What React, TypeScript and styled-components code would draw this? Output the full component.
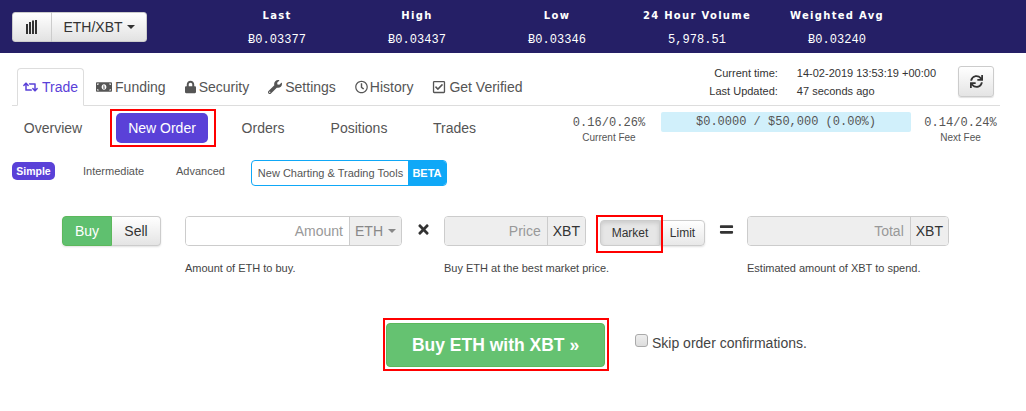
import React from "react";
import styled, { createGlobalStyle } from "styled-components";
import {
  FaEquals,
  FaLock,
  FaMoneyBillAlt,
  FaRegCheckSquare,
  FaRegClock,
  FaRetweet,
  FaSync,
  FaTimes,
  FaWrench,
} from "react-icons/fa";

const GlobalStyle = createGlobalStyle`
  html, body {
    margin: 0;
    padding: 0;
    background: #fff;
    font-family: "Liberation Sans", Arial, sans-serif;
    color: #333;
  }
  * {
    box-sizing: border-box;
  }
`;

const Page = styled.div`
  width: 1026px;
  height: 411px;
  overflow: hidden;
`;

const Header = styled.header`
  height: 53px;
  background: #251f66;
  display: flex;
  align-items: flex-start;
  padding: 12px 0 0 12px;
`;

const SymbolGroup = styled.div`
  display: flex;
  width: 135px;
  height: 30px;
`;

const SymbolButton = styled.div<{ $first?: boolean }>`
  height: 30px;
  display: flex;
  align-items: center;
  justify-content: center;
  gap: 4px;
  width: ${(p) => (p.$first ? "40px" : "96px")};
  font-size: 14px;
  color: #333;
  background: linear-gradient(#fff, #e2e2e2);
  border: 1px solid #ccc;
  border-radius: ${(p) => (p.$first ? "3px 0 0 3px" : "0 3px 3px 0")};
  margin-left: ${(p) => (p.$first ? "0" : "-1px")};
`;

const Caret = styled.span`
  width: 0;
  height: 0;
  border-left: 4px solid transparent;
  border-right: 4px solid transparent;
  border-top: 4px solid currentColor;
`;

const Stats = styled.div`
  display: flex;
  margin-left: 60px;
  margin-top: -4px;
`;

const Stat = styled.div`
  width: 140px;
  text-align: center;
  color: #fff;
`;

const StatLabel = styled.div`
  font-family: "DejaVu Sans", sans-serif;
  font-size: 10px;
  font-weight: bold;
  letter-spacing: 1.3px;
  height: 14px;
  line-height: 14px;
  margin-top: 1px;
  white-space: nowrap;
`;

const StatValue = styled.div`
  font-family: "Liberation Mono", monospace;
  font-size: 12px;
  letter-spacing: 0.05px;
  height: 14px;
  line-height: 14px;
  margin-top: 10px;
`;

const TabBar = styled.div`
  margin: 15px 26px 0 12px;
  height: 38px;
  border-bottom: 1px solid #ddd;
  display: flex;
  padding-left: 5px;
`;

const Tab = styled.a<{ $active?: boolean; $icon: number; $gap?: number }>`
  height: 38px;
  display: flex;
  align-items: center;
  gap: ${(p) => p.$gap ?? 3}px;
  font-size: 14px;
  padding: 0 ${(p) => (p.$active ? "5px" : "7px")} 0 5px;
  margin-right: ${(p) => (p.$active ? "6px" : "5px")};
  color: ${(p) => (p.$active ? "#5a41d8" : "#555")};
  background: ${(p) => (p.$active ? "#fff" : "transparent")};
  border: 1px solid ${(p) => (p.$active ? "#ddd" : "transparent")};
  border-bottom-color: ${(p) => (p.$active ? "#fff" : "transparent")};
  border-radius: 4px 4px 0 0;
  white-space: nowrap;

  svg {
    width: ${(p) => p.$icon}px;
    height: 14px;
    flex: none;
    color: ${(p) => (p.$active ? "#5a41d8" : "#555")};
  }
`;

const TimeBlock = styled.div`
  margin-left: auto;
  display: grid;
  grid-template-columns: auto auto;
  column-gap: 19px;
  row-gap: 6px;
  align-self: flex-start;
  margin-top: -1px;
  font-size: 11px;
  line-height: 12px;
  color: #333;
`;

const TimeLabel = styled.div`
  text-align: right;
`;

const RefreshButton = styled.div`
  width: 36px;
  height: 31px;
  margin: -2px 6px 0 22px;
  border: 1px solid #ccc;
  border-radius: 3px;
  background: linear-gradient(#fff, #e4e4e4);
  box-shadow: 0 1px 1px rgba(0, 0, 0, 0.12);
  display: flex;
  align-items: center;
  justify-content: center;
  font-size: 13px;
  color: #333;
`;

const SubNav = styled.div`
  display: flex;
  align-items: flex-start;
  height: 54px;
  padding: 3px 0 0 12px;
`;

const SubLink = styled.a<{ $width: number; $after?: number }>`
  width: ${(p) => p.$width}px;
  margin-right: ${(p) => p.$after ?? 0}px;
  flex: none;
  height: 38px;
  display: flex;
  align-items: center;
  justify-content: center;
  font-size: 14px;
  color: #555;
`;

const RedBox = styled.div`
  border: 2px solid #f00;
  flex: none;
  display: flex;
`;

const Pill = styled.a`
  width: 92px;
  height: 30px;
  background: #5a41d8;
  color: #fff;
  border-radius: 5px;
  display: flex;
  align-items: center;
  justify-content: center;
  font-size: 14px;
`;

const NewOrderBox = styled(RedBox)`
  width: 106px;
  height: 38px;
  padding: 2px 0 0 4px;
`;

const FeeBlock = styled.div<{ $width: number }>`
  width: ${(p) => p.$width}px;
  flex: none;
  text-align: center;
  margin-top: 7px;
`;

const FeeValue = styled.div`
  font-family: "Liberation Mono", monospace;
  font-size: 12px;
  letter-spacing: 0.05px;
  line-height: 14px;
  color: #555;
`;

const FeeLabel = styled.div`
  font-size: 10px;
  line-height: 12px;
  margin-top: 2px;
  color: #555;
`;

const VolumeBar = styled.div`
  width: 250px;
  height: 20px;
  flex: none;
  margin-top: 3px;
  background: #d1f0fb;
  border-radius: 2px;
  display: flex;
  align-items: center;
  justify-content: center;
  font-family: "Liberation Mono", monospace;
  font-size: 12px;
  color: #555;
`;

const ModeRow = styled.div`
  display: flex;
  align-items: flex-start;
  padding-left: 12px;
  height: 30px;
`;

const ModePill = styled.a`
  width: 43px;
  height: 18px;
  margin-top: 2px;
  background: #5a41d8;
  color: #fff;
  font-size: 10.5px;
  font-weight: bold;
  border-radius: 5px;
  display: flex;
  align-items: center;
  justify-content: center;
`;

const ModeLink = styled.a<{ $width: number; $before?: number }>`
  width: ${(p) => p.$width}px;
  padding-left: ${(p) => p.$before ?? 0}px;
  height: 18px;
  margin-top: 2px;
  font-size: 11px;
  color: #555;
  display: flex;
  align-items: center;
`;

const BetaLink = styled.div`
  width: 196px;
  height: 26px;
  border: 1px solid #0fa8f7;
  border-radius: 4px;
  overflow: hidden;
  display: flex;
  font-size: 11px;
  color: #555;
`;

const BetaText = styled.span`
  flex: 1;
  display: flex;
  align-items: center;
  justify-content: center;
  padding-left: 1px;
  white-space: nowrap;
`;

const BetaTag = styled.span`
  width: 38px;
  background: #0fa8f7;
  color: #fff;
  font-weight: bold;
  font-size: 11px;
  display: flex;
  align-items: center;
  justify-content: center;
`;

const FormRow = styled.div`
  display: flex;
  align-items: flex-start;
  margin-top: 26px;
  padding-left: 62px;
  height: 72px;
`;

const Side = styled.div`
  display: flex;
  width: 99px;
  height: 30px;
  margin-right: 24px;
  border-radius: 4px;
  box-shadow: 0 1px 2px rgba(0, 0, 0, 0.12);
`;

const SideButton = styled.div<{ $active?: boolean }>`
  flex: ${(p) => (p.$active ? "0 0 50px" : "1")};
  display: flex;
  align-items: center;
  justify-content: center;
  font-size: 14px;
  color: ${(p) => (p.$active ? "#fff" : "#333")};
  background: ${(p) => (p.$active ? "#5fc06f" : "linear-gradient(#fff, #e4e4e4)")};
  border: 1px solid ${(p) => (p.$active ? "#5cb85c" : "#ccc")};
  border-left-width: ${(p) => (p.$active ? "1px" : "0")};
  border-radius: ${(p) => (p.$active ? "4px 0 0 4px" : "0 4px 4px 0")};
`;

const Field = styled.div<{ $width: number }>`
  width: ${(p) => p.$width}px;
  flex: none;
`;

const InputGroup = styled.div`
  display: flex;
  height: 30px;
  border: 1px solid #ccc;
  border-radius: 4px;
  overflow: hidden;
`;

const FakeInput = styled.div<{ $disabled?: boolean }>`
  flex: 1;
  display: flex;
  align-items: center;
  justify-content: flex-end;
  padding-right: 6px;
  font-size: 14px;
  color: #999;
  background: ${(p) => (p.$disabled ? "#eee" : "#fff")};
`;

const Addon = styled.div<{ $muted?: boolean }>`
  display: flex;
  align-items: center;
  justify-content: center;
  gap: 5px;
  padding: 0 5px;
  font-size: 14px;
  color: ${(p) => (p.$muted ? "#888" : "#333")};
  background: #eee;
  border-left: 1px solid #ccc;
`;

const Help = styled.div`
  font-size: 11px;
  line-height: 12px;
  margin-top: 16px;
  color: #444;
  white-space: nowrap;
`;

const Operator = styled.div<{ $width: number }>`
  width: ${(p) => p.$width}px;
  height: 26px;
  flex: none;
  display: flex;
  align-items: center;
  justify-content: center;
  font-size: 15px;
  color: #333;
`;

const OrderType = styled.div`
  display: flex;
  margin-top: -1px;
  margin-left: 10px;
  width: 109px;
  flex: none;
`;

const MarketBox = styled(RedBox)`
  width: 67px;
  height: 38px;
  padding: 3px 0 0 2px;
  margin-right: -3px;
  position: relative;
  z-index: 1;
`;

const TypeButton = styled.div<{ $active?: boolean }>`
  height: 26px;
  display: flex;
  align-items: center;
  justify-content: center;
  font-size: 12px;
  color: #333;
  width: ${(p) => (p.$active ? "60px" : "45px")};
  margin-top: ${(p) => (p.$active ? "0" : "5px")};
  background: ${(p) => (p.$active ? "#e6e6e6" : "linear-gradient(#fff, #e8e8e8)")};
  box-shadow: ${(p) =>
    p.$active ? "inset 0 2px 4px rgba(0,0,0,.12)" : "0 1px 2px rgba(0,0,0,.12)"};
  border: 1px solid #ccc;
  border-radius: ${(p) => (p.$active ? "4px 0 0 4px" : "0 4px 4px 0")};
`;

const SubmitRow = styled.div`
  display: flex;
  align-items: flex-start;
  margin-top: 30px;
  padding-left: 383px;
`;

const SubmitBox = styled(RedBox)`
  width: 226px;
  height: 53px;
  padding: 3px 1px 1px;
`;

const SubmitButton = styled.a`
  width: 219px;
  height: 44px;
  background: #65c271;
  border: 1px solid #5cb85c;
  border-radius: 4px;
  color: #fff;
  font-size: 17.5px;
  font-weight: bold;
  display: flex;
  align-items: center;
  justify-content: center;
`;

const SkipLabel = styled.label`
  display: flex;
  align-items: center;
  margin: 15px 0 0 26px;
  height: 20px;
  font-size: 14px;
  color: #444;
  gap: 4px;
`;

const Checkbox = styled.span`
  width: 13px;
  height: 13px;
  margin-top: -5px;
  border: 1px solid #aaa;
  border-radius: 3px;
  background: linear-gradient(#eee, #ddd);
`;

const BarsIcon = () => (
  <svg width="12" height="14" viewBox="0 0 12 14" fill="#333">
    <rect x="0" y="4" width="2" height="10" />
    <rect x="3" y="2" width="2" height="12" />
    <rect x="6" y="0.5" width="2" height="13.5" />
    <rect x="9" y="0" width="2" height="14" />
  </svg>
);

const stats = [
  ["Last", "Ƀ0.03377"],
  ["High", "Ƀ0.03437"],
  ["Low", "Ƀ0.03346"],
  ["24 Hour Volume", "5,978.51"],
  ["Weighted Avg", "Ƀ0.03240"],
];

const App: React.FC = () => {
  return (
    <Page>
      <GlobalStyle />
      <Header>
        <SymbolGroup>
          <SymbolButton $first>
            <BarsIcon />
          </SymbolButton>
          <SymbolButton>
            ETH/XBT <Caret />
          </SymbolButton>
        </SymbolGroup>
        <Stats>
          {stats.map(([label, value]) => (
            <Stat key={label}>
              <StatLabel>{label}</StatLabel>
              <StatValue>{value}</StatValue>
            </Stat>
          ))}
        </Stats>
      </Header>

      <TabBar>
        <Tab $active $icon={15} $gap={4}>
          <FaRetweet /> Trade
        </Tab>
        <Tab $icon={16} $gap={3}>
          <FaMoneyBillAlt /> Funding
        </Tab>
        <Tab $icon={11} $gap={3}>
          <FaLock /> Security
        </Tab>
        <Tab $icon={14}>
          <FaWrench /> Settings
        </Tab>
        <Tab $icon={13} $gap={2}>
          <FaRegClock /> History
        </Tab>
        <Tab $icon={14} $gap={3}>
          <FaRegCheckSquare /> Get Verified
        </Tab>
        <TimeBlock>
          <TimeLabel>Current time:</TimeLabel>
          <div>14-02-2019 13:53:19 +00:00</div>
          <TimeLabel>Last Updated:</TimeLabel>
          <div>47 seconds ago</div>
        </TimeBlock>
        <RefreshButton>
          <FaSync />
        </RefreshButton>
      </TabBar>

      <SubNav>
        <SubLink $width={82} $after={16}>
          Overview
        </SubLink>
        <NewOrderBox>
          <Pill>New Order</Pill>
        </NewOrderBox>
        <SubLink $width={94}>Orders</SubLink>
        <SubLink $width={98}>Positions</SubLink>
        <SubLink $width={93} $after={56}>
          Trades
        </SubLink>
        <FeeBlock $width={104}>
          <FeeValue>0.16/0.26%</FeeValue>
          <FeeLabel>Current Fee</FeeLabel>
        </FeeBlock>
        <VolumeBar>$0.0000 / $50,000 (0.00%)</VolumeBar>
        <FeeBlock $width={99}>
          <FeeValue>0.14/0.24%</FeeValue>
          <FeeLabel>Next Fee</FeeLabel>
        </FeeBlock>
      </SubNav>

      <ModeRow>
        <ModePill>Simple</ModePill>
        <ModeLink $width={121} $before={28}>
          Intermediate
        </ModeLink>
        <ModeLink $width={75}>Advanced</ModeLink>
        <BetaLink>
          <BetaText>New Charting &amp; Trading Tools</BetaText>
          <BetaTag>BETA</BetaTag>
        </BetaLink>
      </ModeRow>

      <FormRow>
        <Side>
          <SideButton $active>Buy</SideButton>
          <SideButton>Sell</SideButton>
        </Side>
        <Field $width={217}>
          <InputGroup>
            <FakeInput>Amount</FakeInput>
            <Addon $muted>
              ETH <Caret />
            </Addon>
          </InputGroup>
          <Help>Amount of ETH to buy.</Help>
        </Field>
        <Operator $width={42}>
          <FaTimes />
        </Operator>
        <Field $width={142}>
          <InputGroup>
            <FakeInput $disabled>Price</FakeInput>
            <Addon>XBT</Addon>
          </InputGroup>
          <Help>Buy ETH at the best market price.</Help>
        </Field>
        <OrderType>
          <MarketBox>
            <TypeButton $active>Market</TypeButton>
          </MarketBox>
          <TypeButton>Limit</TypeButton>
        </OrderType>
        <Operator $width={42}>
          <FaEquals />
        </Operator>
        <Field $width={202}>
          <InputGroup>
            <FakeInput $disabled>Total</FakeInput>
            <Addon>XBT</Addon>
          </InputGroup>
          <Help>Estimated amount of XBT to spend.</Help>
        </Field>
      </FormRow>

      <SubmitRow>
        <SubmitBox>
          <SubmitButton>Buy ETH with XBT »</SubmitButton>
        </SubmitBox>
        <SkipLabel>
          <Checkbox />
          Skip order confirmations.
        </SkipLabel>
      </SubmitRow>
    </Page>
  );
};

export default App;
